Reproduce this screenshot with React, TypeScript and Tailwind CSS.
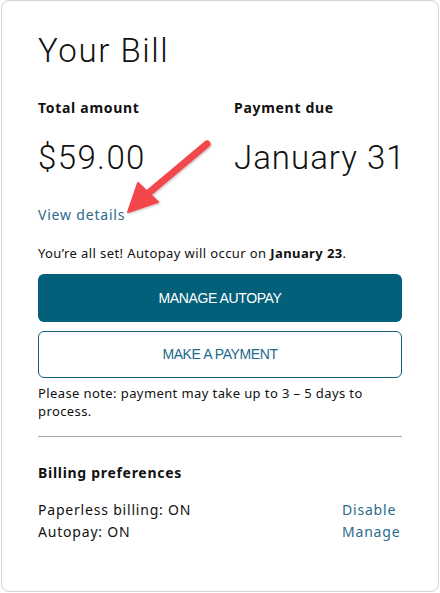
import React from "react";

const font = { fontFamily: '"Noto Sans", "Open Sans", sans-serif' };
const lightFont = { fontFamily: 'Roboto, "Open Sans", sans-serif' };
const btnFont = { fontFamily: '"Liberation Sans", Arial, sans-serif' };

function Arrow() {
  return (
    <svg
      className="pointer-events-none absolute left-0 top-0"
      width="440"
      height="593"
      viewBox="0 0 440 593"
    >
      <defs>
        <filter id="sh" x="-20%" y="-20%" width="140%" height="140%">
          <feDropShadow dx="1" dy="1" stdDeviation="1" floodColor="#000" floodOpacity="0.25" />
        </filter>
      </defs>
      <g filter="url(#sh)" fill="#f2464c" stroke="#f2464c" strokeLinecap="round" strokeLinejoin="round">
        <line x1="207" y1="144" x2="145" y2="196" strokeWidth="7" />
        <polygon points="128,212 138,183 158,202" strokeWidth="2" />
      </g>
    </svg>
  );
}

export default function App() {
  return (
    <div className="relative h-[593px] w-[440px] bg-white text-[#111]" style={font}>
      <div className="mx-px h-[592px] rounded-lg border border-[#d4d4d4] bg-white px-9 pt-[30px]">
        <h1 className="text-[33px] font-light leading-[40px] tracking-[1.6px] text-[#111]" style={lightFont}>
          Your Bill
        </h1>

        <div className="mt-[27px] grid grid-cols-[196px_1fr]">
          <div>
            <div className="text-[14px] font-bold leading-5 tracking-[0.7px]">Total amount</div>
            <div
              className="mt-[20px] whitespace-nowrap text-[33px] font-light leading-[40px] tracking-[1.4px]"
              style={lightFont}
            >
              $59.00
            </div>
          </div>
          <div>
            <div className="text-[14px] font-bold leading-5 tracking-[0.7px]">Payment due</div>
            <div
              className="mt-[20px] whitespace-nowrap text-[33px] font-light leading-[40px] tracking-[1px]"
              style={lightFont}
            >
              January 31
            </div>
          </div>
        </div>

        <a className="mt-[27px] block text-[14px] leading-5 tracking-[0.8px] text-[#2b6a8a]">View details</a>

        <p className="mt-[18px] text-[13px] leading-5 tracking-[0.4px]">
          You’re all set! Autopay will occur on <b>January 23</b>.
        </p>

        <button
          className="mt-[11px] flex h-[48px] w-full items-center justify-center rounded-[6px] bg-[#03607a] text-[14px] tracking-[-0.4px] text-white"
          style={btnFont}
        >
          MANAGE AUTOPAY
        </button>
        <button
          className="mt-[9px] flex h-[47px] w-full items-center justify-center rounded-[6px] border border-[#125f7a] bg-white text-[14px] tracking-[-0.4px] text-[#1a6a8a]"
          style={btnFont}
        >
          MAKE A PAYMENT
        </button>
        <p className="mt-[6px] text-[13px] leading-[18px] tracking-[0.4px]">
          Please note: payment may take up to 3 – 5 days to process.
        </p>

        <hr className="mt-[16px] border-t border-[#a8a8a8]" />

        <div className="mt-[26px] text-[14px] font-bold leading-5 tracking-[0.7px]">Billing preferences</div>

        <div className="mt-[17px] grid grid-cols-[1fr_60px] gap-y-[2px] text-[14px] leading-5 tracking-[0.8px]">
          <span>Paperless billing: ON</span>
          <a className="text-[#2b6a8a]">Disable</a>
          <span>Autopay: ON</span>
          <a className="text-[#2b6a8a]">Manage</a>
        </div>
      </div>
      <Arrow />
    </div>
  );
}
